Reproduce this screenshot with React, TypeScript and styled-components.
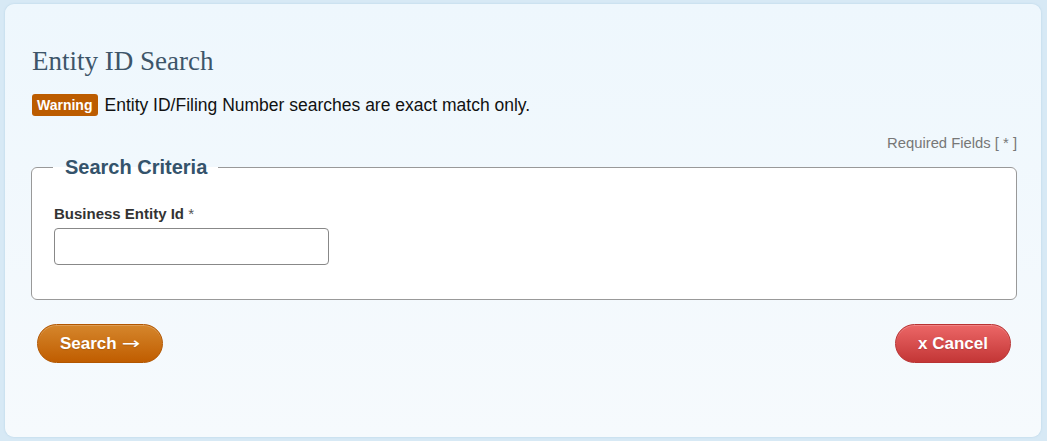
import React from "react";
import styled, { createGlobalStyle } from "styled-components";

const GlobalStyle = createGlobalStyle`
  html, body { margin: 0; padding: 0; }
  body {
    background: #d7e9f5;
    font-family: "Liberation Sans", Arial, sans-serif;
  }
`;

const Page = styled.div`
  padding: 4px 6px 4px 5px;
  height: 441px;
  box-sizing: border-box;
`;

const Panel = styled.main`
  height: 100%;
  box-sizing: border-box;
  border-radius: 9px;
  background: linear-gradient(180deg, #eef7fd 0%, #f6fafd 100%);
  box-shadow: 0 0 2px rgba(150, 190, 215, 0.6);
  padding: 40px 24px 0 26px;
`;

const Title = styled.h1`
  margin: 0 0 0 1px;
  font-family: "Liberation Serif", "Times New Roman", serif;
  font-weight: normal;
  font-size: 27px;
  line-height: 34px;
  color: #3d5569;
`;

const WarningRow = styled.p`
  margin: 16px 0 0 1px;
  display: flex;
  align-items: center;
  gap: 6px;
  font-size: 17.5px;
  color: #111;
  line-height: 22px;
`;

const Badge = styled.span`
  display: inline-block;
  background: #bc5c00;
  color: #fff;
  font-weight: bold;
  font-size: 14px;
  line-height: 22px;
  padding: 0 6px 0 5px;
  border-radius: 3px;
`;

const Required = styled.div`
  margin-top: 18px;
  text-align: right;
  font-size: 14.8px;
  color: #777;
  line-height: 18px;
`;

const Fieldset = styled.fieldset`
  margin: 4px 0 0 0;
  border: 1px solid #999;
  border-radius: 6px;
  background: #fff;
  padding: 27px 22px 34px 22px;
  min-width: 0;
`;

const Legend = styled.legend`
  padding: 0 11px 0 12px;
  margin-left: -1px;
  font-size: 20px;
  font-weight: bold;
  color: #34536b;
  line-height: 22px;
`;

const Label = styled.label`
  display: block;
  font-size: 15px;
  font-weight: bold;
  color: #333;
  line-height: 18px;
  margin-bottom: 5px;
`;

const Star = styled.span`
  font-weight: normal;
  color: #555;
`;

const Input = styled.input`
  display: block;
  width: 275px;
  height: 37px;
  box-sizing: border-box;
  border: 1px solid #888;
  border-radius: 4px;
  background: #fff;
  font-size: 14px;
  padding: 0 8px;
`;

const Actions = styled.div`
  display: flex;
  justify-content: space-between;
  margin: 24px 6px 0 6px;
`;

const Button = styled.button<{ $variant: "search" | "cancel" }>`
  display: inline-flex;
  align-items: center;
  height: 39px;
  padding: 0 22px;
  border-radius: 20px;
  font-family: "Liberation Sans", Arial, sans-serif;
  font-weight: bold;
  font-size: 17px;
  color: #fff;
  cursor: pointer;
  text-shadow: 0 1px 1px rgba(0, 0, 0, 0.15);
  border: 1px solid
    ${(p) => (p.$variant === "search" ? "#b25600" : "#b93333")};
  background: ${(p) =>
    p.$variant === "search"
      ? "linear-gradient(180deg, #d5862c 0%, #c05d00 100%)"
      : "linear-gradient(180deg, #ec6767 0%, #c33636 100%)"};
  box-shadow: inset 0 1px 0 rgba(255, 255, 255, 0.2);
`;

const Arrow = styled.span`
  font-family: "DejaVu Sans", sans-serif;
  font-weight: normal;
  font-size: 22px;
  line-height: 1;
  margin-left: 5px;
  transform: scaleY(0.75);
`;

export default function App() {
  return (
    <>
      <GlobalStyle />
      <Page>
        <Panel>
          <Title>Entity ID Search</Title>
          <WarningRow>
            <Badge>Warning</Badge>
            Entity ID/Filing Number searches are exact match only.
          </WarningRow>
          <Required>Required Fields [ * ]</Required>
          <Fieldset>
            <Legend>Search Criteria</Legend>
            <Label htmlFor="entity-id">
              Business Entity Id <Star>*</Star>
            </Label>
            <Input id="entity-id" type="text" />
          </Fieldset>
          <Actions>
            <Button $variant="search">
              Search<Arrow>→</Arrow>
            </Button>
            <Button $variant="cancel">x Cancel</Button>
          </Actions>
        </Panel>
      </Page>
    </>
  );
}
